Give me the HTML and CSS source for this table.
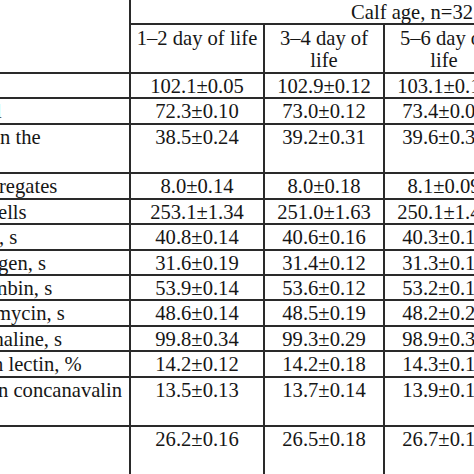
FILE: index.html
```html
<!DOCTYPE html>
<html lang="en">
<head>
<meta charset="utf-8">
<title>Calf age table</title>
<link rel="stylesheet" href="styles.css">
</head>
<body>
<div class="frame">
  <table class="grid">
    <colgroup>
      <col class="c-label">
      <col class="c-wide">
      <col class="c-mid">
      <col class="c-mid">
      <col class="c-rest">
    </colgroup>
    <thead>
      <tr class="top">
        <th class="label head-blank" rowspan="2"></th>
        <th class="group" colspan="4">Calf age, n=32</th>
      </tr>
      <tr class="sub">
        <th>1–2 day of life</th>
        <th>3–4 day of life</th>
        <th>5–6 day of life</th>
        <th>7–8 day of life</th>
      </tr>
    </thead>
    <tbody>
      <tr><td class="label"></td><td>102.1±0.05</td><td>102.9±0.12</td><td>103.1±0.14</td><td></td></tr>
      <tr><td class="label"><span class="cut-4">l</span></td><td>72.3±0.10</td><td>73.0±0.12</td><td>73.4±0.08</td><td></td></tr>
      <tr class="tall"><td class="label"><span class="cut-0">n the</span></td><td>38.5±0.24</td><td>39.2±0.31</td><td>39.6±0.32</td><td></td></tr>
      <tr><td class="label"><span class="cut-1">regates</span></td><td>8.0±0.14</td><td>8.0±0.18</td><td>8.1±0.09</td><td></td></tr>
      <tr><td class="label"><span class="cut-2">ells</span></td><td>253.1±1.34</td><td>251.0±1.63</td><td>250.1±1.47</td><td></td></tr>
      <tr><td class="label"><span class="cut-1">, s</span></td><td>40.8±0.14</td><td>40.6±0.16</td><td>40.3±0.15</td><td></td></tr>
      <tr><td class="label"><span class="cut-2">gen, s</span></td><td>31.6±0.19</td><td>31.4±0.12</td><td>31.3±0.14</td><td></td></tr>
      <tr><td class="label"><span class="cut-8">mbin, s</span></td><td>53.9±0.14</td><td>53.6±0.12</td><td>53.2±0.16</td><td></td></tr>
      <tr><td class="label"><span class="cut-5">mycin, s</span></td><td>48.6±0.14</td><td>48.5±0.19</td><td>48.2±0.21</td><td></td></tr>
      <tr><td class="label"><span class="cut-6">naline, s</span></td><td>99.8±0.34</td><td>99.3±0.29</td><td>98.9±0.31</td><td></td></tr>
      <tr><td class="label"><span class="cut-7">n lectin, %</span></td><td>14.2±0.12</td><td>14.2±0.18</td><td>14.3±0.13</td><td></td></tr>
      <tr class="tall"><td class="label"><span class="cut-2">n concanavalin</span></td><td>13.5±0.13</td><td>13.7±0.14</td><td>13.9±0.15</td><td></td></tr>
      <tr class="tall"><td class="label"></td><td>26.2±0.16</td><td>26.5±0.18</td><td>26.7±0.17</td><td></td></tr>
    </tbody>
  </table>
</div>
</body>
</html>
```
FILE: styles.css
```css
html, body {
  margin: 0;
  padding: 0;
  background: #ffffff;
}

.frame {
  width: 474px;
  height: 474px;
  overflow: hidden;
}

.grid {
  border-collapse: collapse;
  table-layout: fixed;
  width: 694px;
  font-family: "Liberation Serif", "Times New Roman", Times, serif;
  font-size: 20.6px;
  color: #161616;
}

.c-label { width: 130px; }
.c-wide  { width: 134px; }
.c-mid   { width: 120px; }
.c-rest  { width: 190px; }

.grid th,
.grid td {
  border: 2px solid #2a2a2a;
  padding: 1px 0 0;
  line-height: 22.4px;
  vertical-align: top;
  text-align: center;
  font-weight: normal;
  white-space: nowrap;
}

.grid .label {
  border-left: none;
  text-align: left;
  overflow: visible;
}

.top th {
  border-top: none;
  line-height: 22px;
  padding-top: 1px;
}

.sub th {
  white-space: normal;
  line-height: 22px;
  padding: 2px 4px 1px;
}

.tall {
  height: 49.5px;
}

.label span {
  display: inline-block;
}

.cut-0 { margin-left: 0; }
.cut-1 { margin-left: -1px; }
.cut-2 { margin-left: -2px; }
.cut-4 { margin-left: -4px; }
.cut-5 { margin-left: -5px; }
.cut-6 { margin-left: -6.5px; }
.cut-7 { margin-left: -7px; }
.cut-8 { margin-left: -8.5px; }
```
